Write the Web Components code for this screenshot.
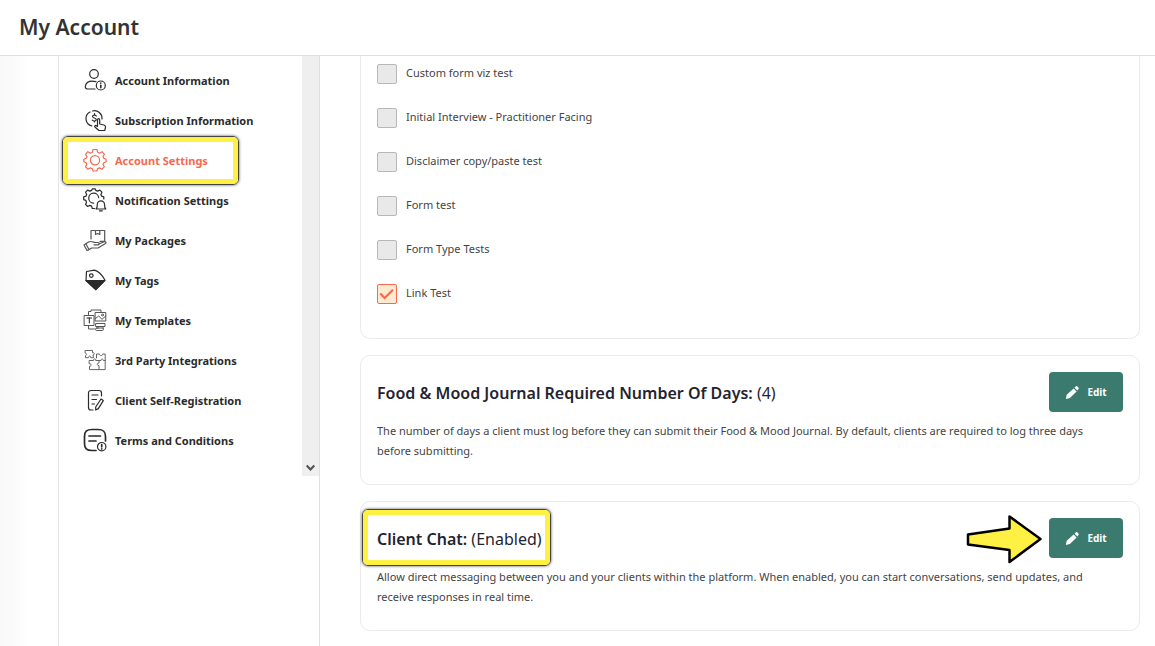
<!DOCTYPE html>
<html lang="en">
<head>
<meta charset="utf-8">
<title>My Account</title>
<style>
  html, body {
    height: 100%;
  }
  body {
    margin: 0;
    overflow: hidden;
    background: #fff;
    font-family: "Noto Sans", "Open Sans", sans-serif;
    font-size: 11px;
    color: #444;
  }
</style>
</head>
<body>

<account-page>
  <span slot="title">My Account</span>

  <side-nav slot="nav">
    <nav-item icon="user">Account Information</nav-item>
    <nav-item icon="subscription">Subscription Information</nav-item>
    <nav-item icon="gear" active>Account Settings</nav-item>
    <nav-item icon="notify">Notification Settings</nav-item>
    <nav-item icon="package">My Packages</nav-item>
    <nav-item icon="tag">My Tags</nav-item>
    <nav-item icon="template">My Templates</nav-item>
    <nav-item icon="puzzle">3rd Party Integrations</nav-item>
    <nav-item icon="form">Client Self-Registration</nav-item>
    <nav-item icon="terms">Terms and Conditions</nav-item>
  </side-nav>

  <form-list>
    <check-row>Custom form viz test</check-row>
    <check-row>Initial Interview - Practitioner Facing</check-row>
    <check-row>Disclaimer copy/paste test</check-row>
    <check-row>Form test</check-row>
    <check-row>Form Type Tests</check-row>
    <check-row checked>Link Test</check-row>
  </form-list>

  <setting-card>
    <span slot="name">Food &amp; Mood Journal Required Number Of Days:</span>
    <span slot="value">(4)</span>
    The number of days a client must log before they can submit their Food &amp; Mood Journal. By default, clients are required to log three days before submitting.
  </setting-card>

  <setting-card marked>
    <span slot="name">Client Chat:</span>
    <span slot="value">(Enabled)</span>
    Allow direct messaging between you and your clients within the platform. When enabled, you can start conversations, send updates, and receive responses in real time.
  </setting-card>
</account-page>

<script>
// 24x24 icons for the side menu
const ICONS = {
  user: `<circle cx="11" cy="6" r="4.300"/><path d="M12 21H4.500c-2.200 0-2.500-2-2-3.500 1-3.500 5-5 10.500-3.800"/>
    <circle cx="17.800" cy="17.500" r="4.500"/><path stroke-width="1.600" d="M17.800 17.300v2.500M17.800 15v.2"/>`,
  subscription: `<path d="M9 18A7.500 7.500 0 0 1 7 4M9.500 3a7.600 7.600 0 0 1 9.500 8"/>
    <path d="M13.300 8c-1-1.300-3.800-1-3.800.6s3.800 1.300 3.800 3-2.900 1.900-4 .6M11.500 5.700V7M11.500 13v1"/>
    <path d="M14.500 18.500V12c0-1.800 2.200-1.800 2.200 0v4l4.300 1c1.400.4 1.700 1.300 1.500 2.500l-.8 3h-5.800l-4-3.500c-.8-1 .5-2 1.500-1.300z"/>`,
  gear: `<path d="M10 1.500h4l.6 2.800 2 .9 2.500-1.500 2.300 2.600-1.400 2.500.8 1.500 2.300.9v2.500l-2.300 1-.8 1.600 1.300 2.500-2.200 2.400-2.600-1.300-2 .8-.5 2.300h-4l-.6-2.300-2-.8-2.600 1.300-2.200-2.400 1.300-2.500-.8-1.600L.9 13.700v-2.500l2.300-.9.8-1.500-1.400-2.500 2.300-2.600 2.500 1.500 2-.9z"/><circle cx="12" cy="12.200" r="4.600"/>`,
  notify: `<path d="M11.500 20.500H9.300l-.7-2.400-1.700-.7-2.300 1.100-2.100-2.100 1-2.200-.7-1.800L.7 11.600V8.900L3 8.100l.7-1.700-1.100-2.200 2-2.100L6.900 3.100l1.700-.7L9.400.8h2.800l.7 1.600 1.700.7 2.300-1 2 2.100-1 2.200.7 1.700 2.200.8v2"/>
    <path d="M10.500 15.200a5 5 0 1 1 5.200-5.500M13 21h9.800c-1.200-1-1.300-2-1.300-4.500a3.500 3.500 0 0 0-7.200 0c0 2.500 0 3.500-1.300 4.500zM16.500 22.800h2.800"/>`,
  package: `<g stroke="#555"><path d="M8 11V2.500h13.700v10.800H17M12.500 2.500v4l2.200-1 2.100 1v-4"/>
    <path d="M1 17 5.500 14c3-1.500 5 .5 6.500.5h3c1.800 0 1.500 2.300 0 2.300h-4M15.500 16.200l5.500-2.500c1.700-.6 2.500 1 1.500 1.700L15 20H8.500L5.500 22M1 17l3 5.500 2-1-3-5.500"/></g>`,
  tag: `<path d="M3.500 3.500 11.500 2.200c3.500 1 8 5.500 10.500 10l-9.200 9.300L3 12.500z"/><circle cx="8.300" cy="7.600" r="1.800"/><path fill="currentColor" d="M3 12.500h18.800l-9 9z"/>`,
  template: `<g stroke="#555" stroke-width="1"><path d="M5.500 7V3.500h2.500V2h10v2M1.500 7.500h9.500v10H1.500z"/>
    <path stroke="#222" d="M4 10h4.500M6.300 10v5"/><path d="M12.500 4.500h10.300v8.500H12.500zM12.500 10.500l3.200-2.500 3.300 3.300 3.800-3.300M5.500 17.500v3.500h6"/>
    <circle cx="19.500" cy="7" r="1"/><path d="M13 15.500h9v3h-9zM15 18.500v2M20 18.500v2"/><rect x="12.500" y="20" width="8" height="2.500" rx="1.200"/></g>`,
  puzzle: `<g stroke="#666" stroke-width="1"><path d="M2.500 2.500h7v2.200c1.800-.8 2.500 2.200.5 2.200l.5 2.800H7.800C8 7.500 5.500 7.500 5.500 9.700H2.500V7.500C4 7.500 4 5 2.500 5z"/>
    <path d="M6.500 12.500h4.200c-.5-2.300 2.300-2.300 2 0h3.300V15c-2.300-.4-2.300 3 0 2.600v4H6.500v-3.400c2.200.4 2.200-3 0-2.600zM13.500 10V6h3c0 2.200 3 2.200 3 0h2.700v15.600H16M16 12.500h2c0-2 2.300-2 2.300 0h2"/></g>`,
  form: `<path d="M10 22H8c-1.800 0-2.500-1-2.500-2.500V5c0-1.800 1-2.500 2.500-2.500h8c1.800 0 2.500 1 2.500 2.500v3M9 7h6M9 11.500h4.500M9 16h2.500"/><path d="m18 11 2.300 1.600-5 8-2.600 1.400v-3z"/>`,
  terms: `<g stroke-width="1.700"><path d="M13 22.500H9c-5.500 0-7.500-2-7.500-7V8.500c0-5 2-7 7.500-7h6c5.500 0 7.500 2 7.500 7V13M6 8h11.500M6 13h7"/></g><circle cx="18.700" cy="18.700" r="4.200"/><path stroke-width="1.700" d="M18.700 16.500v2.300M18.700 20.800v.2"/>`
};

class AccountPage extends HTMLElement {
  constructor() {
    super();
    this.attachShadow({ mode: "open" });
    this.shadowRoot.innerHTML = `
      <style>
        :host {
          display: flex;
          flex-direction: column;
          height: 100vh;
        }
        header {
          flex: none;
          padding: 0 19px;
          border-bottom: 1px solid #dfdfe2;
        }
        h1 {
          margin: 0;
          font-size: 21px;
          line-height: 55px;
          font-weight: 600;
          color: #333;
        }
        .body {
          flex: 1;
          min-height: 0;
          display: flex;
        }
        .gutter {
          flex: none;
          width: 58px;
          background: linear-gradient(to right, #f8f8f8, #fff 32px);
          border-right: 1px solid #e4e4e4;
        }
        main {
          flex: 1;
          min-width: 0;
          overflow: hidden;
          border-left: 1px solid #dfdfe2;
          padding: 0 15px 16px 40px;
          display: flex;
          flex-direction: column;
          gap: 16px;
        }
      </style>
      <header><h1><slot name="title"></slot></h1></header>
      <div class="body">
        <div class="gutter"></div>
        <slot name="nav"></slot>
        <main><slot></slot></main>
      </div>
    `;
  }
}

class SideNav extends HTMLElement {
  constructor() {
    super();
    this.attachShadow({ mode: "open" });
    this.shadowRoot.innerHTML = `
      <style>
        :host {
          display: flex;
          flex: none;
          width: 260px;
          align-items: flex-start;
        }
        nav {
          flex: 1;
          padding-top: 4px;
        }
        .bar {
          width: 17px;
          height: 420px;
          display: flex;
          align-items: flex-end;
          justify-content: center;
          background: #efefef;
        }
        svg {
          width: 9px;
          height: 16px;
        }
      </style>
      <nav><slot></slot></nav>
      <div class="bar">
        <svg viewBox="0 0 9 16" fill="none" stroke="#505050" stroke-width="2"><path d="M.7 5.500 4.500 9.500 8.300 5.500"/></svg>
      </div>
    `;
  }
}

class NavItem extends HTMLElement {
  constructor() {
    super();
    this.attachShadow({ mode: "open" });
    this.shadowRoot.innerHTML = `
      <style>
        :host {
          display: block;
          position: relative;
          color: #2b2b2b;
        }
        :host([active]) {
          color: #f46a4e;
        }
        a {
          display: flex;
          align-items: center;
          gap: 8px;
          height: 40px;
          padding-left: 24px;
          color: inherit;
          font-weight: 700;
          text-decoration: none;
          white-space: nowrap;
        }
        svg {
          width: 24px;
          height: 24px;
          fill: none;
          stroke: currentColor;
          stroke-width: 1.2;
          stroke-linejoin: round;
          stroke-linecap: round;
        }
      </style>
      <a href="#">
        <svg viewBox="0 0 24 24">${ICONS[this.getAttribute("icon")]}</svg>
        <span><slot></slot></span>
      </a>
      ${this.hasAttribute("active") ? '<mark-box style="inset: -4px 63px -5px 3px"></mark-box>' : ""}
    `;
  }
}

// yellow frame that lies over the thing to look at
class MarkBox extends HTMLElement {
  constructor() {
    super();
    this.attachShadow({ mode: "open" });
    this.shadowRoot.innerHTML = `
      <style>
        :host {
          position: absolute;
          z-index: 2;
          box-sizing: border-box;
          border: 1px solid #444;
          border-radius: 6px;
          box-shadow: 0 0 3px rgba(0, 0, 0, 0.7);
          pointer-events: none;
        }
        div {
          box-sizing: border-box;
          height: 100%;
          border: 5px solid #fff044;
          border-radius: 5px;
        }
      </style>
      <div></div>
    `;
  }
}

class FormList extends HTMLElement {
  constructor() {
    super();
    this.attachShadow({ mode: "open" });
    this.shadowRoot.innerHTML = `
      <style>
        :host {
          display: flex;
          flex: none;
          flex-direction: column;
          gap: 24px;
          padding: 8px 16px 34px;
          border: 1px solid #ebebeb;
          border-top: 0;
          border-radius: 0 0 10px 10px;
        }
      </style>
      <slot></slot>
    `;
  }
}

class CheckRow extends HTMLElement {
  constructor() {
    super();
    this.attachShadow({ mode: "open" });
    this.shadowRoot.innerHTML = `
      <style>
        :host {
          display: block;
        }
        label {
          display: flex;
          gap: 9px;
          height: 20px;
          line-height: 18px;
        }
        input {
          appearance: none;
          box-sizing: border-box;
          width: 20px;
          height: 20px;
          margin: 0;
          border: 1px solid #b8b8b8;
          border-radius: 2px;
          background: #e9e9e9;
        }
        input:checked {
          border-color: #f9694c;
          background: #ffead1;
        }
        .box {
          display: grid;
        }
        .box > * {
          grid-area: 1 / 1;
        }
        svg {
          display: none;
          fill: none;
          stroke: #f9694c;
          stroke-width: 2.2;
          pointer-events: none;
        }
        input:checked + svg {
          display: block;
        }
      </style>
      <label>
        <span class="box">
          <input type="checkbox">
          <svg width="20" height="20" viewBox="0 0 20 20"><path d="M3.200 9.500 7.700 14 16 5.700"/></svg>
        </span>
        <span><slot></slot></span>
      </label>
    `;
    this.shadowRoot.querySelector("input").checked = this.hasAttribute("checked");
  }
}

class SettingCard extends HTMLElement {
  constructor() {
    super();
    this.attachShadow({ mode: "open" });
    const marked = this.hasAttribute("marked");
    this.shadowRoot.innerHTML = `
      <style>
        :host {
          display: block;
          flex: none;
          padding: 16px 16px 23px;
          border: 1px solid #ebebeb;
          border-radius: 10px;
        }
        .top {
          display: flex;
          justify-content: space-between;
          align-items: flex-start;
        }
        h2 {
          position: relative;
          margin: 0;
          font-size: 16px;
          line-height: 42px;
          font-weight: 400;
          color: #1f2430;
        }
        b {
          font-weight: 600;
        }
        .action {
          position: relative;
        }
        .arrow {
          position: absolute;
          right: 80px;
          top: -4px;
        }
        p {
          margin: 7px 0 0;
          padding-right: 16px;
          line-height: 20px;
        }
      </style>
      <div class="top">
        <h2>
          <b><slot name="name"></slot></b> <slot name="value"></slot>
          ${marked ? '<mark-box style="inset: -9px -9px -6px -15px"></mark-box>' : ""}
        </h2>
        <div class="action">
          ${marked ? `<svg class="arrow" width="78" height="50" viewBox="0 0 78 50">
            <path d="M3 20.500 44.500 14.500V2.500L75.500 25 44.500 48V36L3 30.500z" fill="#fff044" stroke="#000" stroke-width="2.500" stroke-linejoin="round"/>
          </svg>` : ""}
          <edit-button></edit-button>
        </div>
      </div>
      <p><slot></slot></p>
    `;
  }
}

class EditButton extends HTMLElement {
  constructor() {
    super();
    this.attachShadow({ mode: "open" });
    this.shadowRoot.innerHTML = `
      <style>
        :host {
          display: block;
        }
        button {
          display: flex;
          align-items: center;
          justify-content: center;
          gap: 8px;
          width: 74px;
          height: 40px;
          padding: 0;
          border: 0;
          border-radius: 4px;
          background: #3b7a6e;
          color: #fff;
          font-family: inherit;
          font-size: 10px;
          font-weight: 700;
        }
      </style>
      <button type="button">
        <svg width="14" height="14" viewBox="0 0 14 14" fill="#fff"><path d="m.8 14 .9-4.200L8.600 3.500l3 3-6.700 6.500zM9.500 2.700 11 1.300c.4-.3.9-.3 1.200 0l1.400 1.400c.3.300.3.800 0 1.100l-1.200 1.700z"/></svg>
        <span>Edit</span>
      </button>
    `;
  }
}

customElements.define("account-page", AccountPage);
customElements.define("side-nav", SideNav);
customElements.define("mark-box", MarkBox);
customElements.define("nav-item", NavItem);
customElements.define("form-list", FormList);
customElements.define("check-row", CheckRow);
customElements.define("edit-button", EditButton);
customElements.define("setting-card", SettingCard);
</script>
</body>
</html>
